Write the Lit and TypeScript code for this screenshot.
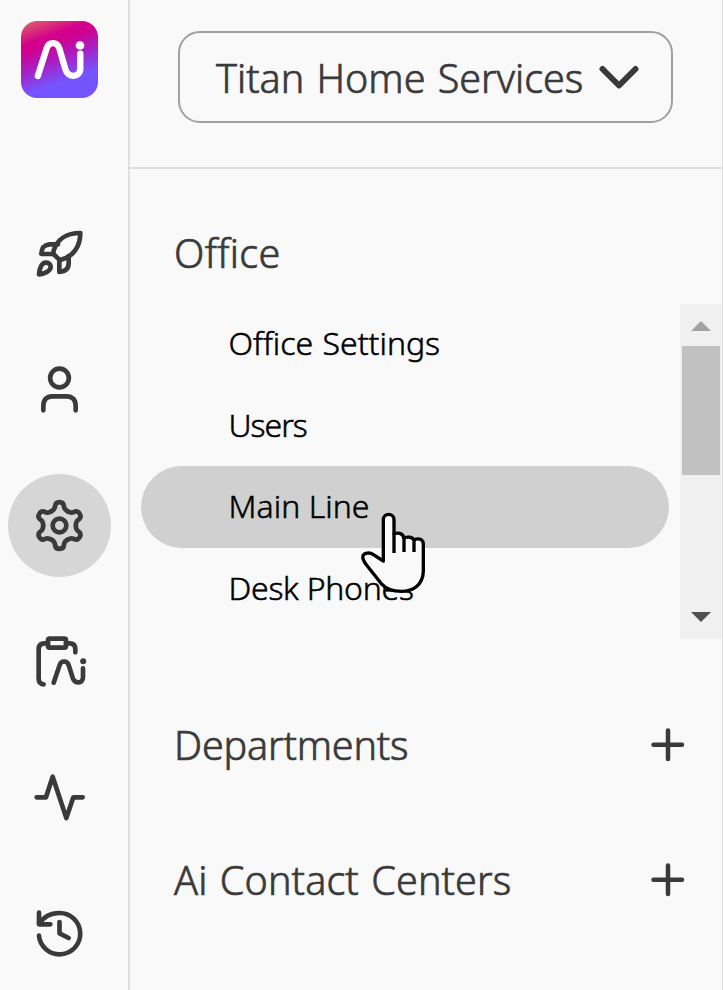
import { LitElement, html, css, svg } from "lit";
import { customElement } from "lit/decorators.js";

const lobe = "M-24.5-42.5C-17-46.500-14-50-13.500-57C-13-66-7-70 0-70S13-66 13.500-57C14-50 17-46.500 24.500-42.500";

const nav = [
  {
    name: "Launch", box: "24 -24 309 309", art: svg`
    <path d="M161 122C171 88 200 69 241 69C241 108 221 138 187 148L178 149L160 132Z"/>
    <path d="M174 103H148C131 105 125 114 124 132H160M178 149V186C199 184 206 174 206 160V138"/>
    <path d="M117 193C118 174 126 158 137 158C153 158 157 174 145 183C138 189 128 192 117 193Z"/>`,
  },
  {
    name: "Profile", box: "24 384 309 309", art: svg`
    <circle cx="178.500" cy="504" r="28"/>
    <path d="M130 601V588C130 570 139 559 157 559H200C218 559 227 570 227 588V601"/>`,
  },
  {
    name: "Settings", box: "24 42 309 309", active: true, art: svg`
    <circle cx="178.500" cy="196.500" r="20.500"/>
    ${[0, 60, 120, 180, 240, 300].map((a) => svg`<path transform="translate(178.500 196.500) rotate(${a})" d=${lobe}/>`)}`,
  },
  {
    name: "Playbooks", box: "24 450 309 309", art: svg`
    <rect x="144" y="536" width="54" height="27" rx="5"/>
    <path d="M144 550H134C122 550 116 556 116 568V656C116 666 121 672 131 673M198 550H209C221 550 226 557 226 568V577"/>
    <path d="M161 668L179 615C183 601 201 601 206 615L217 650C222 672 249 673 249 652V625"/>
    <circle class="dot" cx="249.500" cy="603.500" r="9"/>`,
  },
  {
    name: "Activity", box: "24 -12 309 309", art: svg`
    <path d="M110 142H138L158 80L199 204L220 142H248"/>`,
  },
  {
    name: "History", box: "24 396 309 309", art: svg`
    <path d="M117 488V523H151M117 523C131 500 153 489 178 489A62 62 0 1 1 117 557M178.500 516V550L206 564"/>`,
  },
];

const settings = ["Office Settings", "Users", "Main Line", "Desk Phones"];

@customElement("app-root")
export class AppRoot extends LitElement {
  static styles = css`
    :host { display: flex; position: relative; box-sizing: border-box; width: 723px; height: 990px; overflow: hidden;
      background: #f9f9f9; color: #3a3a3a; font-family: "Noto Sans", "Open Sans", sans-serif; font-weight: 350; border-right: 1px solid #dedede; }
    * { box-sizing: border-box; }
    svg { display: block; }
    .rail { width: 130px; flex: none; border-right: 2px solid #dedede; padding: 21px 0 0 8px; }
    .logo { width: 77px; height: 77px; margin-left: 13px; border-radius: 16px;
      background: linear-gradient(160deg, #dc6d62 0%, #d5008c 24%, #d0008f 32%, #a81fc4 50%, #7654ff 72%, #7254ff 100%); }
    .nav { display: flex; flex-direction: column; gap: 33px; margin-top: 104px; }
    .item { width: 103px; height: 103px; border-radius: 50%; }
    .item.active { background: #d6d6d6; }
    .line { fill: none; stroke: #3a3a3a; stroke-width: 14; stroke-linecap: round; stroke-linejoin: round; }
    .dot { fill: #3a3a3a; stroke: none; }
    .mark { fill: none; stroke: #fff; stroke-width: 19; stroke-linecap: round; stroke-linejoin: round; }
    .mark-dot { fill: #fff; stroke: none; }
    .main { flex: 1; min-width: 0; }
    .head { height: 169px; border-bottom: 2px solid #dedede; padding: 31px 0 0 48px; }
    .select { display: flex; align-items: center; width: 495px; height: 92px; border: 2px solid #a0a0a0; border-radius: 22px; padding: 2px 32px 0 36px; justify-content: space-between; }
    .title { font-size: 39.500px; line-height: 54px; white-space: nowrap; word-spacing: 2px; font-variant-ligatures: none; -webkit-text-stroke: 0.700px #3a3a3a; }
    .t1 { letter-spacing: -0.020px; }
    .t2 { letter-spacing: 0.350px; }
    .t3 { letter-spacing: -0.170px; }
    .t4 { letter-spacing: 0.110px; }
    .section { display: flex; align-items: center; justify-content: space-between; height: 135px; padding: 0 37px 0 44px; }
    .office { height: 134px; padding-top: 34px; }
    .list { display: flex; height: 336px; }
    .rows { width: 528px; margin-left: 11px; }
    .row { height: 81.500px; border-radius: 41px; padding: 0 0 2px 87.500px; display: flex; align-items: center;
      font-size: 32px; color: #000; white-space: nowrap; font-variant-ligatures: none; -webkit-text-stroke: 0.500px #000; }
    .r0 { letter-spacing: 0; word-spacing: 1px; }
    .r1 { letter-spacing: -1.050px; }
    .r2 { letter-spacing: 0.050px; }
    .r3 { letter-spacing: -0.270px; }
    .row.selected { background: #d0d0d0; }
    .scroll { display: flex; flex-direction: column; align-items: center; width: 42px; height: 335px; margin: 1px 0 0 11px; background: #f0f0f0; }
    .thumb { width: 38px; height: 129px; margin-top: 15px; background: #c1c1c1; }
    .up { margin-top: 17px; border: 10px solid transparent; border-top: 0; border-bottom-color: #a3a3a3; }
    .down { margin-top: 137px; border: 10px solid transparent; border-bottom: 0; border-top-color: #505050; }
    .groups { padding-top: 38px; }
    .cursor { position: absolute; left: 340px; top: 490px; }
    .thin { stroke-width: 4.500; }
    .bold { stroke-width: 6; }
  `;

  private plus() {
    return html`<svg width="34" height="34" viewBox="0 0 34 34"><path class="line thin" d="M17 2.500V31M2.500 16.800H31"/></svg>`;
  }

  render() {
    return html`
      <aside class="rail">
        <div class="logo"><svg width="77" height="77" viewBox="63 63 231 231">
          <path class="mark" d="M113.500 228L140 145C146 123 172 125 178 145L196 207C203 235 241 234 241 205V161"/>
          <circle class="mark-dot" cx="240" cy="136.500" r="13"/></svg></div>
        <nav class="nav">
          ${nav.map((n) => html`<div class="item ${n.active ? "active" : ""}" role="button" aria-label=${n.name}>
            <svg width="103" height="103" viewBox=${n.box}><g class="line">${n.art}</g></svg></div>`)}
        </nav>
      </aside>
      <main class="main">
        <header class="head"><div class="select"><span class="title t1">Titan Home Services</span>
          <svg width="40" height="26" viewBox="0 0 40 26"><path class="line bold" d="M3.500 4L20 20.500L36.500 4"/></svg></div></header>
        <div class="section office"><span class="title t2">Office</span></div>
        <div class="list">
          <div class="rows">${settings.map((s, i) => html`<div class="row r${i} ${i === 2 ? "selected" : ""}"><span>${s}</span></div>`)}</div>
          <div class="scroll"><i class="up"></i><i class="thumb"></i><i class="down"></i></div>
        </div>
        <div class="groups">
          <div class="section"><span class="title t3">Departments</span>${this.plus()}</div>
          <div class="section"><span class="title t4">Ai Contact Centers</span>${this.plus()}</div>
        </div>
      </main>
      <svg class="cursor" width="120" height="120" viewBox="0 120 360 360">
        <path fill="#f9f9f9" stroke="#000" stroke-width="10" stroke-linejoin="round"
          d="M130 333V209C130 188 162 188 162 209V251C172 248 188 248 192 264C204 259 218 261 222 270C235 263 250 267 250 283V365C248 405 220 424 184 424C158 424 137 416 123 400L82 348C73 337 66 326 69 317C73 307 91 307 100 314Z"/>
        <path fill="none" stroke="#000" stroke-width="10" d="M162 250V309M192 264V306M222 270V306"/>
      </svg>
    `;
  }
}
